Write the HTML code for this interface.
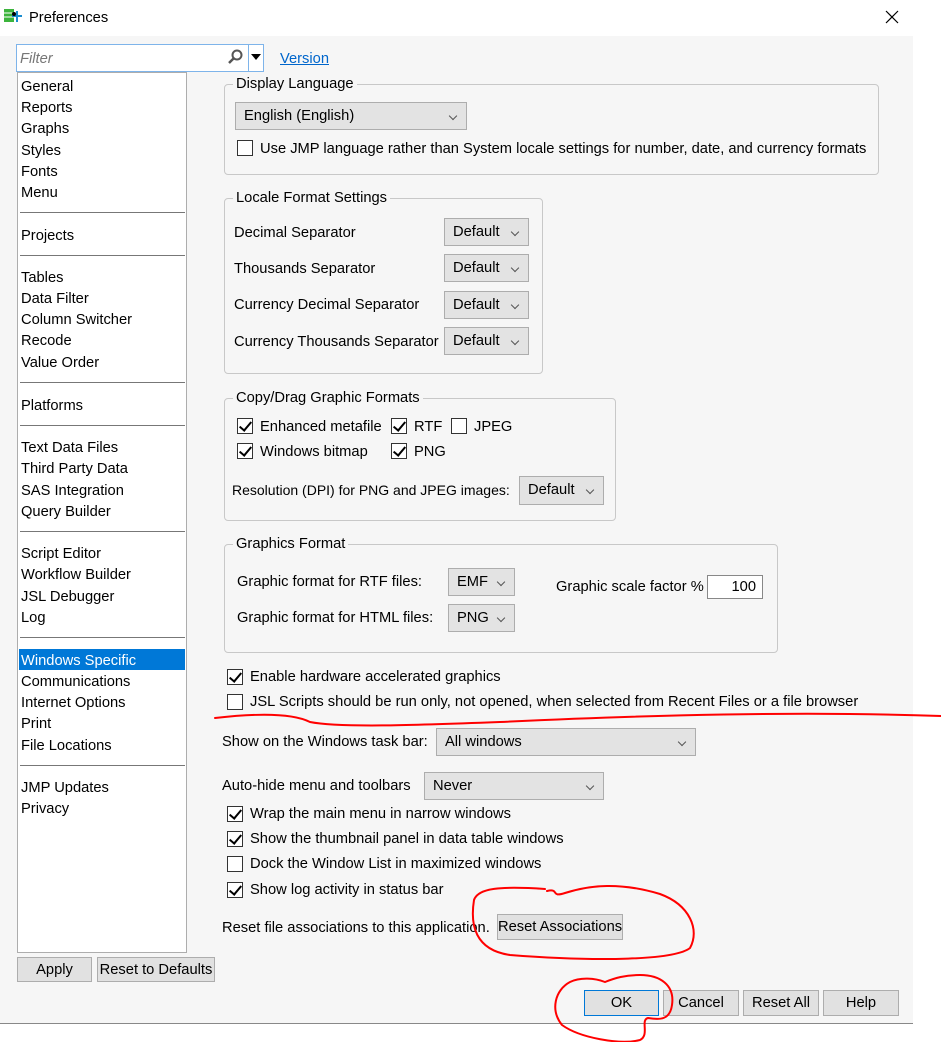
<!DOCTYPE html>
<html><head><meta charset="utf-8"><style>
*{box-sizing:border-box;margin:0;padding:0}
body{width:941px;height:1042px;background:#fff;font-family:"Liberation Sans",sans-serif;font-size:14.7px;color:#000;position:relative;overflow:hidden}
.a{position:absolute;white-space:nowrap}
.t{position:absolute;white-space:nowrap;line-height:18px;height:18px;transform:translateY(1px)}
.g{position:absolute;border:1px solid #c8c8c8;border-radius:4px}
.gt{position:absolute;top:-10px;left:8px;background:#f6f6f6;padding:0 3px;line-height:18px}
.s{position:absolute;background:#e3e3e3;border:1px solid #adadad;line-height:26px;padding-left:8px;white-space:nowrap}
.s:after{content:"";position:absolute;right:10px;top:10px;width:5px;height:5px;border-right:1px solid #555;border-bottom:1px solid #555;transform:rotate(45deg)}
.c{position:absolute;width:16px;height:16px;border:1px solid #333;background:#fff}
.c.k:after{content:"";position:absolute;left:4px;top:0px;width:5px;height:10px;border-right:2px solid #000;border-bottom:2px solid #000;transform:rotate(40deg)}
.b{position:absolute;background:#e1e1e1;border:1px solid #adadad;text-align:center;line-height:24px;white-space:nowrap;padding:0}
.sep{position:absolute;left:20px;width:165px;height:1px;background:#777}
</style></head><body>
<div class="a" style="left:0;top:36px;width:913px;height:988px;background:#f6f6f6"></div>
<div class="a" style="left:0;top:1023px;width:913px;height:1px;background:#888"></div>
<svg class="a" style="left:4px;top:8px" width="20" height="16"><rect x="0" y="1" width="10" height="13" fill="#3cb43c"/><line x1="0" y1="5" x2="10" y2="5" stroke="#fff"/><line x1="0" y1="9" x2="10" y2="9" stroke="#fff"/><path d="M8 8 L18 8 M13 3 L13 14" stroke="#1a8ccf" stroke-width="2"/><circle cx="10" cy="6" r="2" fill="#000"/></svg>
<div class="t" style="left:29px;top:8px">Preferences</div>
<svg class="a" style="left:885px;top:10px" width="14" height="14"><path d="M1 1L13 13M13 1L1 13" stroke="#000" stroke-width="1.2"/></svg>

<div class="a" style="left:16px;top:44px;width:248px;height:28px;border:1px solid #7eb4ea;background:#fff"></div>
<div class="a" style="left:248px;top:44px;width:1px;height:28px;background:#7eb4ea"></div>
<div class="t" style="left:20px;top:49px;color:#777;font-style:italic">Filter</div>
<svg class="a" style="left:227px;top:49px" width="16" height="16"><circle cx="10" cy="6" r="4.5" fill="none" stroke="#555" stroke-width="2"/><path d="M7 9L2 14" stroke="#555" stroke-width="2.5"/></svg>
<svg class="a" style="left:251px;top:54px" width="10" height="6"><path d="M0 0H10L5 6Z" fill="#000"/></svg>
<div class="t" style="left:280px;top:49px;color:#0066cc;text-decoration:underline">Version</div>

<div class="a" style="left:17px;top:72px;width:170px;height:881px;background:#fff;border:1px solid #adadad"></div>
<div class="a" style="left:19px;top:649px;width:166px;height:21px;background:#0078d7"></div>
<div class="t" style="left:21px;top:77px">General</div>
<div class="t" style="left:21px;top:98px">Reports</div>
<div class="t" style="left:21px;top:119px">Graphs</div>
<div class="t" style="left:21px;top:141px">Styles</div>
<div class="t" style="left:21px;top:162px">Fonts</div>
<div class="t" style="left:21px;top:183px">Menu</div>
<div class="sep" style="top:212px"></div>
<div class="t" style="left:21px;top:226px">Projects</div>
<div class="sep" style="top:255px"></div>
<div class="t" style="left:21px;top:268px">Tables</div>
<div class="t" style="left:21px;top:289px">Data Filter</div>
<div class="t" style="left:21px;top:310px">Column Switcher</div>
<div class="t" style="left:21px;top:331px">Recode</div>
<div class="t" style="left:21px;top:353px">Value Order</div>
<div class="sep" style="top:382px"></div>
<div class="t" style="left:21px;top:396px">Platforms</div>
<div class="sep" style="top:425px"></div>
<div class="t" style="left:21px;top:438px">Text Data Files</div>
<div class="t" style="left:21px;top:459px">Third Party Data</div>
<div class="t" style="left:21px;top:481px">SAS Integration</div>
<div class="t" style="left:21px;top:502px">Query Builder</div>
<div class="sep" style="top:531px"></div>
<div class="t" style="left:21px;top:544px">Script Editor</div>
<div class="t" style="left:21px;top:565px">Workflow Builder</div>
<div class="t" style="left:21px;top:587px">JSL Debugger</div>
<div class="t" style="left:21px;top:608px">Log</div>
<div class="sep" style="top:637px"></div>
<div class="t" style="left:21px;top:651px;color:#fff">Windows Specific</div>
<div class="t" style="left:21px;top:672px">Communications</div>
<div class="t" style="left:21px;top:693px">Internet Options</div>
<div class="t" style="left:21px;top:714px">Print</div>
<div class="t" style="left:21px;top:736px">File Locations</div>
<div class="sep" style="top:765px"></div>
<div class="t" style="left:21px;top:778px">JMP Updates</div>
<div class="t" style="left:21px;top:799px">Privacy</div>
<div class="b" style="left:17px;top:957px;width:75px;height:25px">Apply</div>
<div class="b" style="left:97px;top:957px;width:118px;height:25px">Reset to Defaults</div>

<div class="g" style="left:224px;top:84px;width:655px;height:91px"><div class="gt">Display Language</div></div>
<div class="s" style="left:235px;top:102px;width:232px;height:28px">English (English)</div>
<div class="c" style="left:237px;top:140px"></div>
<div class="t" style="left:260px;top:139px">Use JMP language rather than System locale settings for number, date, and currency formats</div>

<div class="g" style="left:224px;top:198px;width:319px;height:176px"><div class="gt">Locale Format Settings</div></div>
<div class="t" style="left:234px;top:223px">Decimal Separator</div>
<div class="t" style="left:234px;top:259px">Thousands Separator</div>
<div class="t" style="left:234px;top:295px">Currency Decimal Separator</div>
<div class="t" style="left:234px;top:332px">Currency Thousands Separator</div>
<div class="s" style="left:444px;top:218px;width:85px;height:28px">Default</div>
<div class="s" style="left:444px;top:254px;width:85px;height:28px">Default</div>
<div class="s" style="left:444px;top:291px;width:85px;height:28px">Default</div>
<div class="s" style="left:444px;top:327px;width:85px;height:28px">Default</div>

<div class="g" style="left:224px;top:398px;width:392px;height:123px"><div class="gt">Copy/Drag Graphic Formats</div></div>
<div class="c k" style="left:237px;top:418px"></div><div class="t" style="left:260px;top:417px">Enhanced metafile</div>
<div class="c k" style="left:391px;top:418px"></div><div class="t" style="left:414px;top:417px">RTF</div>
<div class="c" style="left:451px;top:418px"></div><div class="t" style="left:474px;top:417px">JPEG</div>
<div class="c k" style="left:237px;top:443px"></div><div class="t" style="left:260px;top:442px">Windows bitmap</div>
<div class="c k" style="left:391px;top:443px"></div><div class="t" style="left:414px;top:442px">PNG</div>
<div class="t" style="left:232px;top:480px;font-size:14px">Resolution (DPI) for PNG and JPEG images:</div>
<div class="s" style="left:519px;top:476px;width:85px;height:29px">Default</div>

<div class="g" style="left:224px;top:544px;width:554px;height:109px"><div class="gt">Graphics Format</div></div>
<div class="t" style="left:237px;top:572px">Graphic format for RTF files:</div>
<div class="t" style="left:237px;top:608px">Graphic format for HTML files:</div>
<div class="s" style="left:448px;top:568px;width:67px;height:28px">EMF</div>
<div class="s" style="left:448px;top:604px;width:67px;height:28px">PNG</div>
<div class="t" style="left:556px;top:577px">Graphic scale factor %</div>
<div class="a" style="left:707px;top:575px;width:56px;height:24px;background:#fff;border:1px solid #888;text-align:right;padding-right:6px;line-height:22px">100</div>

<div class="c k" style="left:227px;top:669px"></div><div class="t" style="left:250px;top:667px">Enable hardware accelerated graphics</div>
<div class="c" style="left:227px;top:694px"></div><div class="t" style="left:250px;top:692px">JSL Scripts should be run only, not opened, when selected from Recent Files or a file browser</div>
<div class="t" style="left:222px;top:732px">Show on the Windows task bar:</div>
<div class="s" style="left:436px;top:728px;width:260px;height:28px">All windows</div>
<div class="t" style="left:222px;top:776px">Auto-hide menu and toolbars</div>
<div class="s" style="left:424px;top:772px;width:180px;height:28px">Never</div>
<div class="c k" style="left:227px;top:806px"></div><div class="t" style="left:250px;top:804px">Wrap the main menu in narrow windows</div>
<div class="c k" style="left:227px;top:831px"></div><div class="t" style="left:250px;top:829px">Show the thumbnail panel in data table windows</div>
<div class="c" style="left:227px;top:856px"></div><div class="t" style="left:250px;top:854px">Dock the Window List in maximized windows</div>
<div class="c k" style="left:227px;top:882px"></div><div class="t" style="left:250px;top:880px">Show log activity in status bar</div>
<div class="t" style="left:222px;top:918px">Reset file associations to this application.</div>
<div class="b" style="left:497px;top:914px;width:126px;height:26px">Reset Associations</div>

<div class="b" style="left:584px;top:990px;width:75px;height:26px;border-color:#0078d7">OK</div>
<div class="b" style="left:663px;top:990px;width:76px;height:26px">Cancel</div>
<div class="b" style="left:743px;top:990px;width:76px;height:26px">Reset All</div>
<div class="b" style="left:823px;top:990px;width:76px;height:26px">Help</div>

<svg class="a" style="left:0;top:0" width="941" height="1042">
<g fill="none" stroke="#f00" stroke-width="2" stroke-linecap="round">
<path d="M215 718 C250 714 290 712 310 722 C340 728 420 725 500 722 C650 715 800 711 941 716"/>
<path d="M547 891 C560 888 550 898 565 893 C590 885 620 882 660 894 C690 905 700 930 690 948 C675 960 600 962 510 955 C475 950 470 925 474 900 C478 888 500 886 545 889"/>
<path d="M605 982 C615 978 625 975 640 975 C660 975 675 985 672 1005 C670 1020 660 1020 648 1018 C640 1020 650 1035 640 1040 C620 1045 580 1038 562 1025 C550 1010 555 990 570 982 C580 977 595 978 605 982"/>
</g></svg>
</body></html>
